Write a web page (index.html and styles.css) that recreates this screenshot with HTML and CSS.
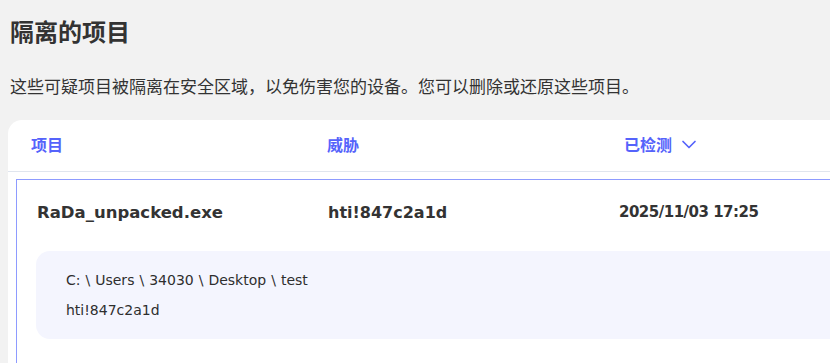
FILE: index.html
```html
<!DOCTYPE html>
<html lang="zh-CN">
  <head>
    <meta charset="UTF-8" />
    <meta name="viewport" content="width=device-width, initial-scale=1.0" />
    <title>隔离的项目</title>
    <link rel="stylesheet" href="styles.css">
  </head>
  <body>
    <div class="page">
      <h1 class="title">隔离的项目</h1>
      <p class="desc">这些可疑项目被隔离在安全区域，以免伤害您的设备。您可以删除或还原这些项目。</p>
      <div class="card">
        <div class="head">
          <span>项目</span>
          <span>威胁</span>
          <span class="sort">已检测
            <svg width="18" height="18" viewBox="0 0 18 18"><path d="M3 6.5l6 6 6-6" fill="none" stroke="currentColor" stroke-width="1.7" stroke-linecap="round" stroke-linejoin="round"/></svg>
          </span>
        </div>
        <div class="row active">
          <div class="cells">
            <span class="name">RaDa_unpacked.exe</span>
            <span>hti!847c2a1d</span>
            <span class="date">2025/11/03 17:25</span>
          </div>
          <div class="detail">
            <div>C:<span class="sep">\</span>Users<span class="sep">\</span>34030<span class="sep">\</span>Desktop<span class="sep">\</span>test</div>
            <div>hti!847c2a1d</div>
          </div>
        </div>
      </div>
    </div>
  </body>
</html>
```

FILE: styles.css
```css
body {
  margin: 0;
  background: #f2f2f2;
  color: #333;
  font-family: "DejaVu Sans", "Noto Sans CJK SC", sans-serif;
  overflow: hidden;
}
.page {
  padding: 13px 0 0 8px;
}
.title {
  margin: 0 0 0 2px;
  font-family: "Noto Sans CJK SC", sans-serif;
  font-size: 24px;
  font-weight: 700;
  line-height: 36px;
  color: #333;
}
.desc {
  margin: 25px 0 0 2px;
  font-family: "Noto Sans CJK SC", sans-serif;
  font-size: 17px;
  line-height: 24px;
  color: #333;
}
.card {
  margin-top: 22px;
  width: 900px;
  background: #fff;
  border-radius: 14px 0 0 0;
}
.head {
  box-sizing: border-box;
  display: grid;
  grid-template-columns: 296px 297px auto;
  padding: 0 0 4px 23px;
  height: 52px;
  align-items: center;
  border-bottom: 1px solid #e0e5ee;
  color: #5563fb;
  font-family: "Noto Sans CJK SC", sans-serif;
  font-size: 16px;
  font-weight: 700;
}
.sort {
  display: flex;
  align-items: center;
  gap: 8px;
}
.row {
  margin: 7px 0 0 8px;
}
.row.active {
  border: 1px solid #8e9bff;
  padding-bottom: 30px;
}
.cells {
  display: grid;
  grid-template-columns: 291px 291px auto;
  padding: 0 0 0 20px;
  height: 64px;
  align-items: center;
  font-size: 16px;
  font-weight: 700;
  color: #333;
}
.name {
  font-size: 16.5px;
}
.date {
  font-size: 15px;
  letter-spacing: -0.5px;
}
.detail {
  margin: 7px 0 0 19px;
  background: #f4f5fe;
  border-radius: 14px 0 0 14px;
  padding: 14px 30px;
  font-size: 14px;
  line-height: 30px;
  color: #2e2e2e;
}
.sep {
  padding: 0 5px;
}
```
